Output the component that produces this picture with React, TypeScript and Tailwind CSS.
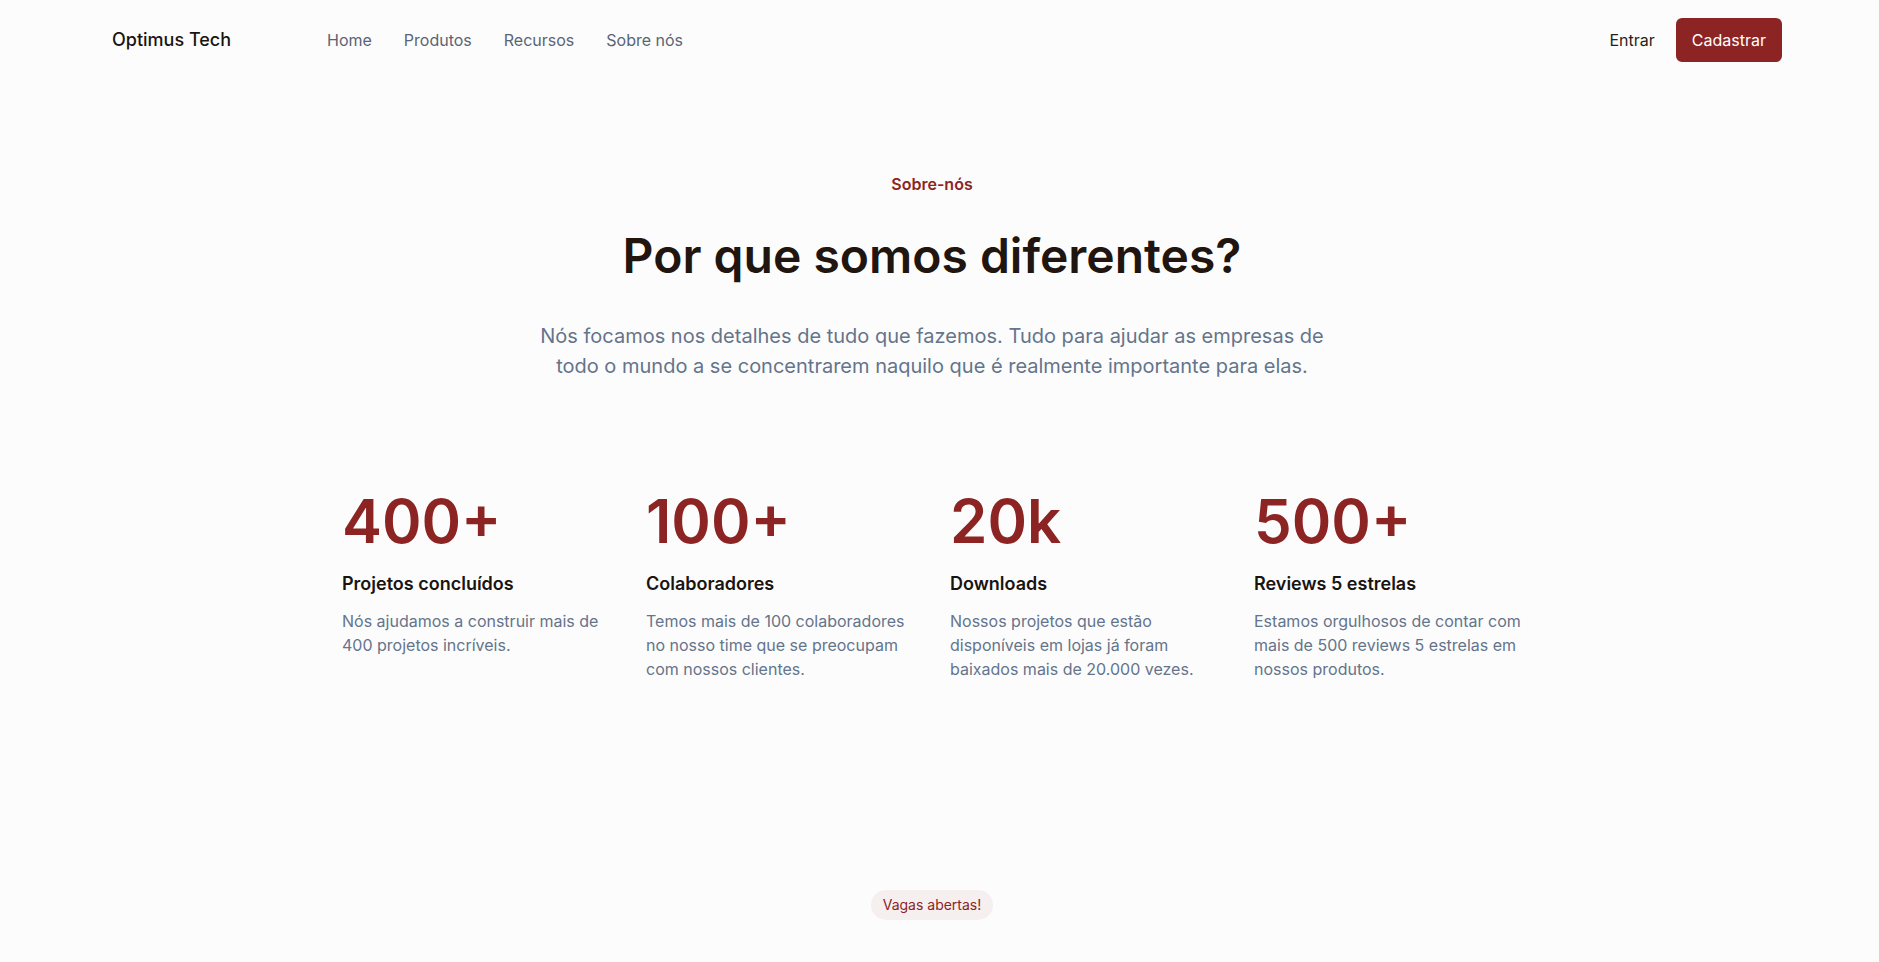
const navLinks = ["Home", "Produtos", "Recursos", "Sobre nós"];

const stats = [
  {
    value: "400+",
    title: "Projetos concluídos",
    text: "Nós ajudamos a construir mais de 400 projetos incríveis.",
  },
  {
    value: "100+",
    title: "Colaboradores",
    text: "Temos mais de 100 colaboradores no nosso time que se preocupam com nossos clientes.",
  },
  {
    value: "20k",
    title: "Downloads",
    text: "Nossos projetos que estão disponíveis em lojas já foram baixados mais de 20.000 vezes.",
  },
  {
    value: "500+",
    title: "Reviews 5 estrelas",
    text: "Estamos orgulhosos de contar com mais de 500 reviews 5 estrelas em nossos produtos.",
  },
];

const jobs = [
  { role: "Desenvolvedor Front-end", area: "Engenharia", place: "Remoto", type: "Tempo integral" },
  { role: "Desenvolvedor Back-end", area: "Engenharia", place: "São Paulo, SP", type: "Tempo integral" },
  { role: "Designer de Produto", area: "Design", place: "Remoto", type: "Tempo integral" },
  { role: "Analista de QA", area: "Engenharia", place: "Belo Horizonte, MG", type: "Tempo integral" },
  { role: "Gerente de Projetos", area: "Operações", place: "Remoto", type: "Tempo integral" },
  { role: "Especialista em Marketing", area: "Marketing", place: "Rio de Janeiro, RJ", type: "Meio período" },
];

const footerCols = [
  { title: "Empresa", items: ["Sobre nós", "Carreiras", "Blog", "Imprensa"] },
  { title: "Produtos", items: ["Aplicativos", "Sites", "Integrações", "Consultoria"] },
  { title: "Suporte", items: ["Central de ajuda", "Documentação", "Status", "Contato"] },
  { title: "Legal", items: ["Privacidade", "Termos de uso", "Cookies", "Licenças"] },
];

function Header() {
  return (
    <header className="w-[1894px] px-28 py-[18px] flex items-center">
      <div className="w-[215px] text-lg font-medium text-[#1a1410]">Optimus Tech</div>
      <nav className="flex items-center gap-8">
        {navLinks.map((link) => (
          <a key={link} href="#" className="text-base text-[#5b6475]">
            {link}
          </a>
        ))}
      </nav>
      <div className="ml-auto flex items-center gap-[21px]">
        <a href="#" className="text-base text-[#2a1f17]">
          Entrar
        </a>
        <button className="rounded-md bg-[#8c2424] px-4 py-2.5 text-base text-white">
          Cadastrar
        </button>
      </div>
    </header>
  );
}

function About() {
  return (
    <section className="pt-[90px] flex flex-col items-center">
      <p className="text-base/7 font-semibold text-[#8c2424]">Sobre-nós</p>
      <h1 className="mt-[34px] text-5xl/none font-semibold text-[#21150f]">Por que somos diferentes?</h1>
      <p className="mt-[41px] max-w-[800px] text-center text-xl/[30px] text-[#64748b]">
        Nós focamos nos detalhes de tudo que fazemos. Tudo para ajudar as empresas de todo o mundo a
        se concentrarem naquilo que é realmente importante para elas.
      </p>
      <div className="mt-[110px] w-[1180px] grid grid-cols-4 gap-9">
        {stats.map((s) => (
          <div key={s.title}>
            <div className="text-6xl/none font-semibold text-[#8c2424]">{s.value}</div>
            <h3 className="mt-[19px] text-lg font-semibold text-[#1a1410]">{s.title}</h3>
            <p className="mt-[11px] text-base/6 text-[#64748b]">{s.text}</p>
          </div>
        ))}
      </div>
    </section>
  );
}

function Careers() {
  return (
    <section className="pt-[209px] flex flex-col items-center">
      <span className="rounded-full bg-[#f5efef] px-3 py-[5px] text-sm text-[#8c2424]">
        Vagas abertas!
      </span>
      <h2 className="mt-16 text-4xl font-semibold text-[#21150f]">Venha trabalhar com a gente</h2>
      <p className="mt-6 max-w-[680px] text-center text-lg leading-relaxed text-[#64748b]">
        Estamos sempre em busca de pessoas talentosas e apaixonadas por tecnologia para fazer parte
        do nosso time.
      </p>
      <div className="mt-20 w-[1180px] grid grid-cols-2 gap-8">
        {jobs.map((job) => (
          <div key={job.role} className="rounded-xl border border-[#ece7e7] bg-white p-8">
            <span className="text-sm font-semibold text-[#8c2424]">{job.area}</span>
            <h3 className="mt-3 text-xl font-semibold text-[#1a1410]">{job.role}</h3>
            <p className="mt-3 text-base/6 text-[#64748b]">
              Ajude-nos a construir produtos incríveis para clientes do mundo todo.
            </p>
            <div className="mt-6 flex items-center gap-3 text-sm text-[#5b6475]">
              <span className="rounded-full bg-[#f3f4f6] px-3 py-1">{job.place}</span>
              <span className="rounded-full bg-[#f3f4f6] px-3 py-1">{job.type}</span>
              <a href="#" className="ml-auto font-semibold text-[#8c2424]">
                Ver vaga →
              </a>
            </div>
          </div>
        ))}
      </div>
      <div className="mt-40 w-[1180px] rounded-2xl bg-[#8c2424] px-16 py-20 flex flex-col items-center">
        <h2 className="text-4xl font-semibold text-white">Pronto para começar?</h2>
        <p className="mt-6 max-w-[600px] text-center text-lg leading-relaxed text-[#f3dede]">
          Entre em contato com o nosso time e descubra como podemos ajudar a sua empresa a crescer.
        </p>
        <button className="mt-10 rounded-md bg-white px-5 py-3 text-base font-semibold text-[#8c2424]">
          Fale conosco
        </button>
      </div>
    </section>
  );
}

function Footer() {
  return (
    <footer className="mt-40 border-t border-[#ece7e7] pt-20 pb-24 flex flex-col items-center">
      <div className="w-[1180px] grid grid-cols-5 gap-9">
        <div>
          <div className="text-lg text-[#1a1410]">Optimus Tech</div>
          <p className="mt-4 text-sm/6 text-[#64748b]">
            Tecnologia feita com cuidado para empresas de todo o mundo.
          </p>
        </div>
        {footerCols.map((col) => (
          <div key={col.title}>
            <h4 className="text-sm font-semibold text-[#1a1410]">{col.title}</h4>
            <ul className="mt-6 space-y-4">
              {col.items.map((item) => (
                <li key={item} className="text-sm text-[#5b6475]">
                  {item}
                </li>
              ))}
            </ul>
          </div>
        ))}
      </div>
      <div className="mt-20 w-[1180px] border-t border-[#ece7e7] pt-8 text-sm text-[#64748b]">
        © 2024 Optimus Tech. Todos os direitos reservados.
      </div>
    </footer>
  );
}

export default function App() {
  return (
    <div className="min-h-screen bg-[#fcfcfc] [font-family:Inter,'Noto_Sans',sans-serif]">
      <Header />
      <main className="w-[1864px]">
        <About />
        <Careers />
        <Footer />
      </main>
    </div>
  );
}
